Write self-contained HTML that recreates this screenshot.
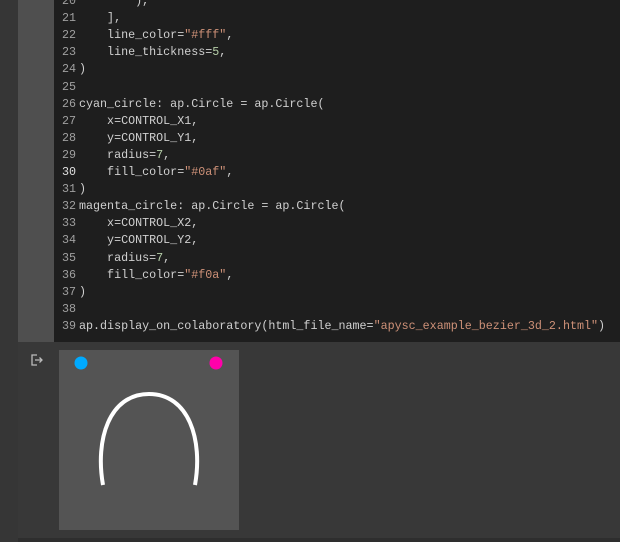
<!DOCTYPE html>
<html><head><meta charset="utf-8"><style>
body{margin:0;width:620px;height:542px;background:#363636;overflow:hidden;position:relative;font-family:"Liberation Mono","Noto Sans CJK JP",monospace;}
.gut{position:absolute;left:18px;top:0;width:36px;height:342px;background:#4f4f4f;}
.code{position:absolute;left:54px;top:0;width:566px;height:342px;background:#1e1e1e;}
.ln{position:absolute;left:0;width:22px;text-align:right;color:#a0a0a0;font-size:11.7px;}
.tx{position:absolute;left:25px;color:#d0d0d0;font-size:11.7px;white-space:pre;}
.s{color:#ce9178}.n{color:#b5cea8}
.out{position:absolute;left:18px;top:342px;width:602px;height:196px;background:#383838;}
.bot{position:absolute;left:18px;top:538px;width:602px;height:4px;background:#2e2e2e;}
</style></head><body>
<div class="gut"></div>
<div class="code" id="c"></div>
<div class="out"></div>
<div class="bot"></div>
<svg style="position:absolute;left:30px;top:353px" width="14" height="14" viewBox="0 0 14 14"><path d="M7 2H2v10h5" fill="none" stroke="#bbb" stroke-width="1.3"/><path d="M5 7h7M9.5 4.5L12 7l-2.5 2.5" fill="none" stroke="#bbb" stroke-width="1.3"/></svg>
<svg style="position:absolute;left:59px;top:350px" width="180" height="180"><rect width="180" height="180" fill="#545454"/><circle cx="22" cy="13" r="6.5" fill="#00aaff"/><circle cx="157" cy="13" r="6.5" fill="#ff00aa"/><path d="M44 135 C36 90 50 44 90 44 C130 44 144 90 136 135" fill="none" stroke="#fff" stroke-width="4"/></svg>
<script>
var L=[[20,'        ),'],[21,'    ],'],[22,'    line_color=<span class="s">"#fff"</span>,'],[23,'    line_thickness=<span class="n">5</span>,'],[24,')'],[25,''],[26,'cyan_circle: ap.Circle = ap.Circle('],[27,'    x=CONTROL_X1,'],[28,'    y=CONTROL_Y1,'],[29,'    radius=<span class="n">7</span>,'],[30,'    fill_color=<span class="s">"#0af"</span>,'],[31,')'],[32,'magenta_circle: ap.Circle = ap.Circle('],[33,'    x=CONTROL_X2,'],[34,'    y=CONTROL_Y2,'],[35,'    radius=<span class="n">7</span>,'],[36,'    fill_color=<span class="s">"#f0a"</span>,'],[37,')'],[38,''],[39,'ap.display_on_colaboratory(html_file_name=<span class="s">"apysc_example_bezier_3d_2.html"</span>)']];
var h='';L.forEach(function(l,i){var y=-6+i*17.1;h+='<div class="ln" style="top:'+y+'px'+(l[0]==30?';color:#e0e0e0':'')+'">'+l[0]+'</div><div class="tx" style="top:'+y+'px">'+l[1]+'</div>';});
document.getElementById('c').innerHTML=h;
</script>
</body></html>
